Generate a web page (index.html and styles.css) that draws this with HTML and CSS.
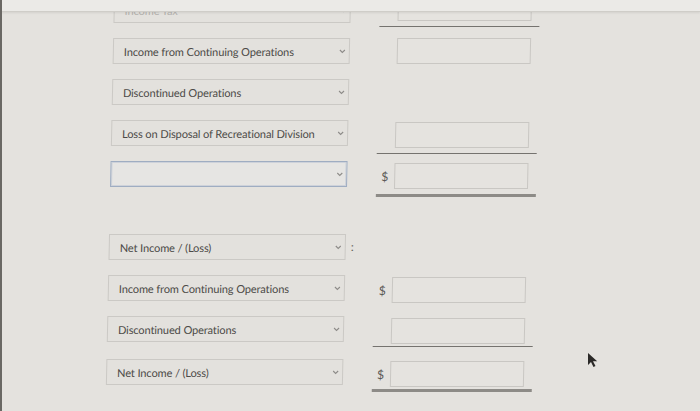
FILE: index.html
```html
<!DOCTYPE html>
<html lang="en">
<head>
<meta charset="utf-8">
<title>Income Statement</title>
<link rel="stylesheet" href="styles.css">
</head>
<body>
<div class="edge"></div>
<div class="topbar"></div>
<main class="sheet">
  <div class="row">
    <div class="select"><span class="label faint">Income Tax</span><span class="chev"><svg width="7" height="5" viewBox="0 0 7 5"><path d="M1 1l2.5 2.5L6 1" fill="none" stroke="currentColor" stroke-width="1.1"/></svg></span></div>
    <div class="colon"></div>
    <div class="amount ul-thin up"><span class="dollar"></span><div class="input"></div></div>
  </div>
  <div class="row">
    <div class="select"><span class="label">Income from Continuing Operations</span><span class="chev"><svg width="7" height="5" viewBox="0 0 7 5"><path d="M1 1l2.5 2.5L6 1" fill="none" stroke="currentColor" stroke-width="1.1"/></svg></span></div>
    <div class="colon"></div>
    <div class="amount"><span class="dollar"></span><div class="input"></div></div>
  </div>
  <div class="row">
    <div class="select"><span class="label">Discontinued Operations</span><span class="chev"><svg width="7" height="5" viewBox="0 0 7 5"><path d="M1 1l2.5 2.5L6 1" fill="none" stroke="currentColor" stroke-width="1.1"/></svg></span></div>
  </div>
  <div class="row">
    <div class="select"><span class="label">Loss on Disposal of Recreational Division</span><span class="chev"><svg width="7" height="5" viewBox="0 0 7 5"><path d="M1 1l2.5 2.5L6 1" fill="none" stroke="currentColor" stroke-width="1.1"/></svg></span></div>
    <div class="colon"></div>
    <div class="amount ul-thin low"><span class="dollar"></span><div class="input"></div></div>
  </div>
  <div class="row">
    <div class="select focus"><span class="label"></span><span class="chev"><svg width="7" height="5" viewBox="0 0 7 5"><path d="M1 1l2.5 2.5L6 1" fill="none" stroke="currentColor" stroke-width="1.1"/></svg></span></div>
    <div class="colon"></div>
    <div class="amount ul-thick low"><span class="dollar">$</span><div class="input"></div></div>
  </div>

  <div class="row gap-lg">
    <div class="select"><span class="label">Net Income / (Loss)</span><span class="chev"><svg width="7" height="5" viewBox="0 0 7 5"><path d="M1 1l2.5 2.5L6 1" fill="none" stroke="currentColor" stroke-width="1.1"/></svg></span></div>
    <div class="colon">:</div>
  </div>
  <div class="row">
    <div class="select"><span class="label">Income from Continuing Operations</span><span class="chev"><svg width="7" height="5" viewBox="0 0 7 5"><path d="M1 1l2.5 2.5L6 1" fill="none" stroke="currentColor" stroke-width="1.1"/></svg></span></div>
    <div class="colon"></div>
    <div class="amount low"><span class="dollar">$</span><div class="input"></div></div>
  </div>
  <div class="row">
    <div class="select"><span class="label">Discontinued Operations</span><span class="chev"><svg width="7" height="5" viewBox="0 0 7 5"><path d="M1 1l2.5 2.5L6 1" fill="none" stroke="currentColor" stroke-width="1.1"/></svg></span></div>
    <div class="colon"></div>
    <div class="amount ul-thin low tight"><span class="dollar"></span><div class="input"></div></div>
  </div>
  <div class="row last">
    <div class="select"><span class="label">Net Income / (Loss)</span><span class="chev"><svg width="7" height="5" viewBox="0 0 7 5"><path d="M1 1l2.5 2.5L6 1" fill="none" stroke="currentColor" stroke-width="1.1"/></svg></span></div>
    <div class="colon"></div>
    <div class="amount ul-thick low tight"><span class="dollar">$</span><div class="input"></div></div>
  </div>
</main>
<svg class="cursor" width="12" height="16" viewBox="0 0 12 16"><path d="M1 1l0 12 3-3 2.5 5 2-1-2.5-4.8 4.2 0z" fill="#2b2a28"/></svg>
</body>
</html>
```

FILE: styles.css
```css
html, body {
  margin: 0;
  padding: 0;
}
body {
  width: 700px;
  height: 411px;
  overflow: hidden;
  background: #e4e2de;
  font-family: Lato, "Open Sans", sans-serif;
  color: #4c4a47;
  position: relative;
}
.edge {
  position: absolute;
  left: 0;
  top: 0;
  bottom: 0;
  width: 2px;
  background: #6a6864;
  z-index: 3;
}
.topbar {
  position: absolute;
  left: 0;
  top: 0;
  width: 100%;
  height: 11px;
  background: #ebeae7;
  border-bottom: 1px solid #cfcdc8;
  box-shadow: 0 1px 2px rgba(0,0,0,0.08);
  z-index: 2;
}
.sheet {
  margin-top: -3px;
  padding-left: 114px;
  transform: skewX(-1.2deg);
  transform-origin: 0 0;
  display: flex;
  flex-direction: column;
  gap: 15px;
}
.row {
  display: flex;
  align-items: flex-start;
  height: 26px;
}
.row.gap-lg {
  margin-top: 32px;
}
.row.last {
  margin-top: 2px;
}
.select {
  box-sizing: border-box;
  width: 237px;
  height: 26px;
  border: 1px solid #cbc9c5;
  background: #e3e1dd;
  display: flex;
  align-items: center;
  justify-content: space-between;
  padding: 0 3px 0 10px;
  font-size: 11px;
  letter-spacing: -0.1px;
}
.select.focus {
  border-color: #9fadc2;
  background: #e6e5e3;
  box-shadow: inset 0 0 0 1px rgba(160,175,200,0.35);
}
.label.faint {
  color: #b4b2ae;
}
.chev {
  color: #8e8c89;
  display: flex;
}
.colon {
  width: 29px;
  padding-left: 5px;
  box-sizing: border-box;
  font-size: 12px;
  color: #6a6865;
  line-height: 26px;
}
.amount {
  box-sizing: border-box;
  width: 160px;
  display: flex;
  align-items: center;
  justify-content: flex-end;
  padding-right: 8px;
  padding-bottom: 5px;
}
.amount.low {
  margin-top: 2px;
}
.amount.up {
  margin-top: -2px;
}
.amount.tight {
  padding-bottom: 2px;
}
.amount.ul-thin {
  border-bottom: 1px solid #75736f;
}
.amount.ul-thick {
  border-bottom: 3px solid #8d8b87;
}
.dollar {
  font-size: 12px;
  color: #5a5855;
  margin-right: 6px;
}
.input {
  box-sizing: border-box;
  width: 134px;
  height: 26px;
  border: 1px solid #c9c7c3;
  background: #e5e3df;
}
.cursor {
  position: absolute;
  left: 587px;
  top: 352px;
}
```
